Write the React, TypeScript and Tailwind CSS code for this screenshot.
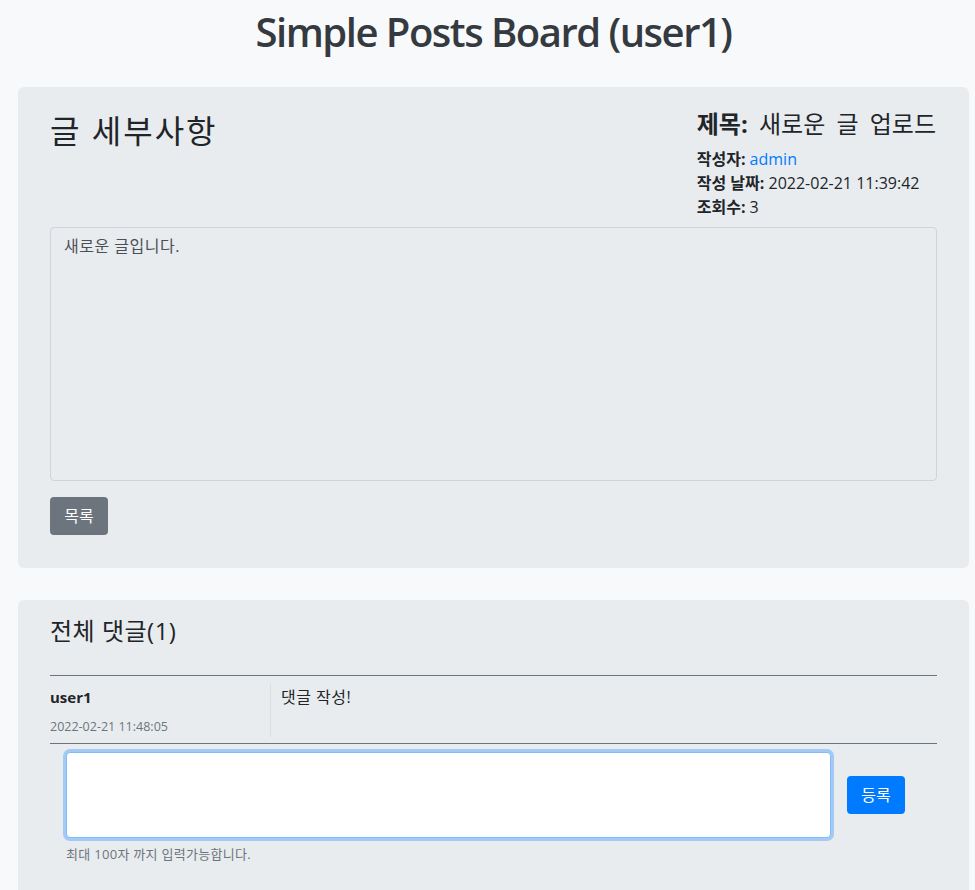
export default function App() {
  const font = { fontFamily: '"Open Sans", "Noto Sans CJK KR", sans-serif' };
  return (
    <div className="min-h-screen bg-[#f8f9fa] text-[#212529]" style={font}>
      <div className="pl-[18px] pr-[6px]">
        <h1 className="pt-[8px] mb-[31px] text-center text-[40px] leading-[48px] font-semibold text-[#343a40] tracking-[-1.5px]">
          Simple Posts Board (user1)
        </h1>

        {/* post detail */}
        <div className="rounded-md bg-[#e9ecef] px-8 pt-[22px] pb-[33px]">
          <div className="flex justify-between">
            <h2 className="mt-[3px] text-[32px] leading-[38px] font-normal tracking-[2px] text-[#212529]">글 세부사항</h2>
            <div className="pr-[1px]">
              <h4 className="text-[24px] leading-[29px] mb-[9px] [word-spacing:5px]">
                <span className="font-bold">제목:</span> 새로운 글 업로드
              </h4>
              <div className="text-[16px] leading-6">
                <p>
                  <span className="font-bold">작성자:</span>{' '}
                  <span className="text-[#007bff]">admin</span>
                </p>
                <p>
                  <span className="font-bold">작성 날짜:</span> 2022-02-21 11:39:42
                </p>
                <p>
                  <span className="font-bold">조회수:</span> 3
                </p>
              </div>
            </div>
          </div>
          <div className="mt-[8px] h-[254px] rounded border border-[#ced4da] px-[13px] py-[6px] text-[16px] leading-6 tracking-[0.5px] text-[#495057]">
            새로운 글입니다.
          </div>
          <button className="mt-4 h-[38px] w-[58px] rounded bg-[#6c757d] text-[16px] text-white">
            목록
          </button>
        </div>

        {/* comments */}
        <div className="mt-8 rounded-t-md bg-[#e9ecef] px-8 pt-[14px] pb-[28px]">
          <h4 className="text-[24px] leading-[34px] mb-[27px] tracking-[0.5px]">
            전체 댓글<span className="font-medium">(1)</span>
          </h4>
          <div className="border-t border-b border-[#6c757d]">
            <div className="flex pt-2 pb-[6px]">
              <div className="w-[221px] border-r border-[#dcdfe2] pt-[3px]">
                <div className="text-[15px] leading-5 font-bold">user1</div>
                <div className="mt-[10px] text-[12.5px] leading-5 text-[#6c757d]">2022-02-21 11:48:05</div>
              </div>
              <div className="pl-[10px] pt-[3px] text-[16px] leading-5 tracking-[0.5px]">댓글 작성!</div>
            </div>
          </div>
          <div className="flex items-center pl-4 pt-2">
            <textarea className="h-[86px] w-[765px] resize-none rounded border border-[#80bdff] bg-white shadow-[0_0_0_3px_rgba(0,123,255,0.3)] outline-none" />
            <button className="ml-4 h-[38px] w-[58px] rounded bg-[#007bff] text-[16px] text-white">
              등록
            </button>
          </div>
          <p className="pl-4 mt-[6px] text-[13px] leading-5 tracking-[0.3px] text-[#6c757d]">최대 100자 까지 입력가능합니다.</p>
        </div>
      </div>
    </div>
  );
}
